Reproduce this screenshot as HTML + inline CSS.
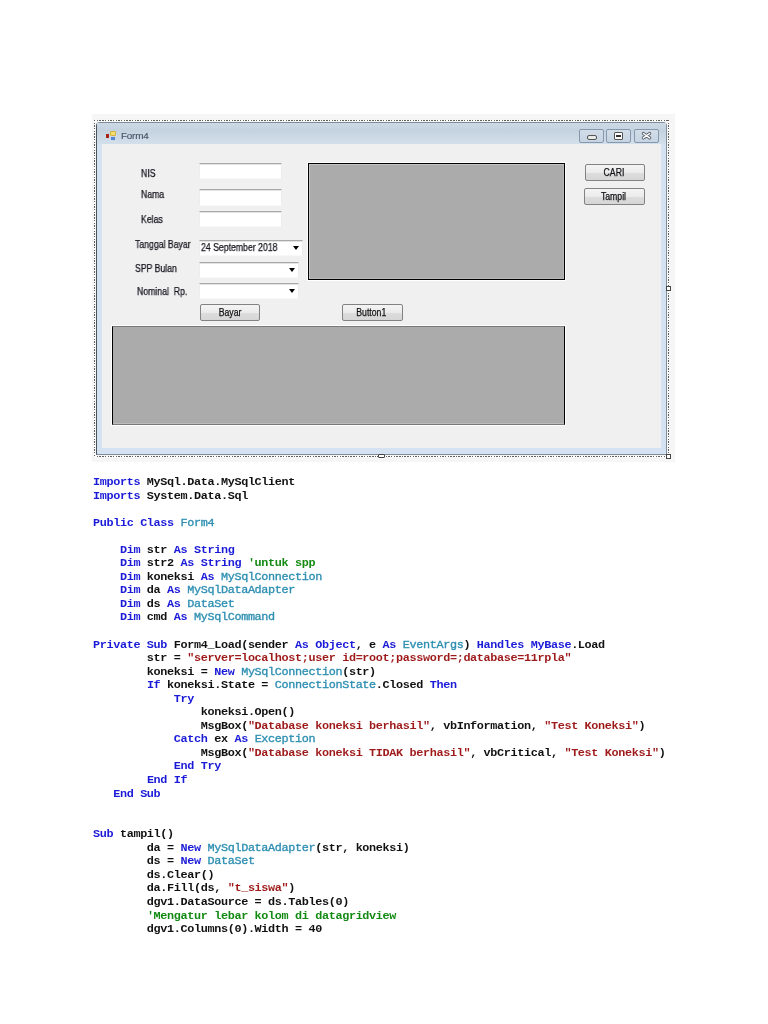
<!DOCTYPE html>
<html><head><meta charset="utf-8">
<style>
html,body{margin:0;padding:0;background:#fff;width:768px;height:1024px;overflow:hidden;position:relative}
.a{position:absolute}
.ui{will-change:transform;font-family:"Liberation Sans",sans-serif;font-size:10px;letter-spacing:0;color:#14141c;-webkit-text-stroke:0.25px #14141c;white-space:nowrap}
.sx{transform:scaleX(0.87);transform-origin:0 0}
.btn span{display:inline-block;transform:scaleX(0.87);transform-origin:50% 50%;position:relative;left:-1.5px}
#bg{left:92px;top:114px;width:583px;height:348px;background:#f6f6f6}
.dh{height:1px;background:repeating-linear-gradient(90deg,#606060 0 1.4px,#fff 1.4px 2.7px)}
.dv{width:1px;background:repeating-linear-gradient(180deg,#606060 0 1.4px,#fff 1.4px 2.7px)}
#frame{left:96px;top:122px;width:569px;height:331px;border:1px solid #7f8c9a;border-left-color:#4a525c;border-radius:4px 4px 0 0;background:#d4e2f1}
#title{left:97px;top:123px;width:569px;height:21px;background:linear-gradient(#cddae6,#c4d2df 35%,#d3e0ec 100%)}
#client{left:102px;top:144px;width:559px;height:304px;background:#f0f0f0}
.cb{top:129px;width:23px;height:12px;border:1px solid #8598ad;border-radius:2px;background:linear-gradient(#d2dde8,#c6d4e2)}
.tb{width:80.6px;border-radius:1px;height:13px;background:#fff;border:1px solid #ececec;border-bottom-color:#f8f8f8;border-top-color:#a9a9a9;box-shadow:inset 0 1px #e2e2e2}
.dd{height:14px;background:#fff;border:1px solid #ececec;border-bottom-color:#f8f8f8;border-top-color:#a9a9a9;box-shadow:inset 0 1px #e2e2e2}
.arr{width:0;height:0;border-left:3px solid transparent;border-right:3px solid transparent;border-top:4px solid #000}
.btn{height:14.8px;border:1px solid #828282;border-radius:2px;background:linear-gradient(#f4f4f4 0%,#ebebeb 50%,#dddddd 51%,#d6d6d6 100%);text-align:center;line-height:15.5px;color:#111;box-sizing:content-box;padding-right:0}
.panel{background:#ababab;border:1px solid #000;border-top-color:#606060;box-shadow:0 0 0 1px #fff}
.h{width:3px;height:3px;border:1px solid #444;background:#fff}
pre{margin:0;will-change:transform;font-family:"Liberation Mono",monospace;font-weight:bold;font-size:11.8px;letter-spacing:-0.345px;line-height:13.54px;color:#111}
.k{color:#1a1ad8}
.t{color:#2e8fb2;font-weight:normal;-webkit-text-stroke:0.35px #2e8fb2}
.s{color:#9e1a1a}
.c{color:#138a13}
</style></head><body>
<div class="a" id="bg"></div>
<div class="a dh" style="left:94px;top:120px;width:575px"></div><div class="a dh" style="left:94px;top:456px;width:575px"></div><div class="a dv" style="left:94px;top:120px;height:337px"></div><div class="a dv" style="left:668px;top:120px;height:337px"></div>
<div class="a" id="frame"></div>
<div class="a" id="title"></div>
<div class="a" id="client"></div>
<!-- title icon -->
<div class="a" style="left:106px;top:134px;width:3px;height:4px;background:#a82416"></div>
<div class="a" style="left:110px;top:130.5px;width:4px;height:3px;background:#f4e070;border:1px solid #d8b03a;border-radius:1px"></div>
<div class="a" style="left:110.5px;top:137px;width:4px;height:3px;background:#5585d5"></div>
<div class="a ui" style="left:120.5px;top:129.9px;font-size:9.9px;color:#465264;-webkit-text-stroke:0.15px #465264;letter-spacing:-0.2px">Form4</div>
<!-- caption buttons -->
<div class="a cb" style="left:579px"></div>
<div class="a cb" style="left:606px"></div>
<div class="a cb" style="left:634px"></div>
<div class="a" style="left:587px;top:135px;width:8px;height:3px;border:1px solid #555;border-radius:2px;background:#e8e8e8"></div>
<div class="a" style="left:614px;top:132px;width:7px;height:6px;border:1px solid #555;border-radius:1px;background:#fff"></div>
<div class="a" style="left:616px;top:135px;width:5px;height:2px;background:#333"></div>
<svg class="a" style="left:638px;top:129px" width="17" height="14"><path d="M5.4 4.5 L11.6 8.9 M11.6 4.5 L5.4 8.9" stroke="#56606c" stroke-width="3.3" stroke-linecap="round"/><path d="M5.4 4.5 L11.6 8.9 M11.6 4.5 L5.4 8.9" stroke="#fff" stroke-width="1.5" stroke-linecap="round"/></svg>

<!-- labels -->
<div class="a ui sx" style="left:141px;top:168px">NIS</div>
<div class="a ui sx" style="left:141px;top:189px">Nama</div>
<div class="a ui sx" style="left:141px;top:214px">Kelas</div>
<div class="a ui sx" style="left:135px;top:239px">Tanggal Bayar</div>
<div class="a ui sx" style="left:135px;top:263px">SPP Bulan</div>
<div class="a ui sx" style="left:137px;top:285.5px">Nominal&nbsp; Rp.</div>
<!-- textboxes -->
<div class="a tb" style="left:199px;top:163px;height:13.5px"></div>
<div class="a tb" style="left:199px;top:189px;height:14.5px"></div>
<div class="a tb" style="left:199px;top:211.3px;height:14px"></div>
<div class="a dd" style="left:199px;top:240px;width:101.7px"></div>
<div class="a ui sx" style="left:201px;top:242px">24 September 2018</div>
<div class="a arr" style="left:293px;top:246px"></div>
<div class="a dd" style="left:199px;top:262px;width:97.8px"></div>
<div class="a arr" style="left:289px;top:268px"></div>
<div class="a dd" style="left:199px;top:283px;width:97.8px"></div>
<div class="a arr" style="left:289px;top:289px"></div>
<!-- panels -->
<div class="a panel" style="left:308px;top:163px;width:255px;height:115px;border-top-color:#000;box-shadow:0 0 0 1px #fff,inset 1px 1px #c4c4c4,inset -1px -1px #b8b8b8"></div>
<div class="a panel" style="left:112px;top:326px;width:451px;height:96.8px;border-top-color:#7a7a7a;border-bottom-color:#7a7a7a;box-shadow:0 0 0 1px #fff,inset 0 -1px #bdbdbd"></div>
<!-- buttons -->
<div class="a btn ui" style="left:585px;top:164px;width:58px"><span>CARI</span></div>
<div class="a btn ui" style="left:584px;top:188px;width:59px;height:14.8px;line-height:16px"><span>Tampil</span></div>
<div class="a btn ui" style="left:200px;top:304px;width:58px"><span style="left:0">Bayar</span></div>
<div class="a btn ui" style="left:342px;top:304px;width:59px"><span>Button1</span></div>
<!-- handles -->
<div class="a h" style="left:666px;top:286px"></div>
<div class="a h" style="left:378px;top:454px;width:4.7px;height:2.4px;border-radius:1px"></div>
<div class="a h" style="left:666px;top:454px"></div>

<pre class="a" style="left:93px;top:475.6px"><span class="k">Imports</span> MySql.Data.MySqlClient
<span class="k">Imports</span> System.Data.Sql

<span class="k">Public Class</span> <span class="t">Form4</span>

    <span class="k">Dim</span> str <span class="k">As String</span>
    <span class="k">Dim</span> str2 <span class="k">As String</span> <span class="c">'untuk spp</span>
    <span class="k">Dim</span> koneksi <span class="k">As</span> <span class="t">MySqlConnection</span>
    <span class="k">Dim</span> da <span class="k">As</span> <span class="t">MySqlDataAdapter</span>
    <span class="k">Dim</span> ds <span class="k">As</span> <span class="t">DataSet</span>
    <span class="k">Dim</span> cmd <span class="k">As</span> <span class="t">MySqlCommand</span>

<span class="k">Private Sub</span> Form4_Load(sender <span class="k">As Object</span>, e <span class="k">As</span> <span class="t">EventArgs</span>) <span class="k">Handles MyBase</span>.Load
        str = <span class="s">"server=localhost;user id=root;password=;database=11rpla"</span>
        koneksi = <span class="k">New</span> <span class="t">MySqlConnection</span>(str)
        <span class="k">If</span> koneksi.State = <span class="t">ConnectionState</span>.Closed <span class="k">Then</span>
            <span class="k">Try</span>
                koneksi.Open()
                MsgBox(<span class="s">"Database koneksi berhasil"</span>, vbInformation, <span class="s">"Test Koneksi"</span>)
            <span class="k">Catch</span> ex <span class="k">As</span> <span class="t">Exception</span>
                MsgBox(<span class="s">"Database koneksi TIDAK berhasil"</span>, vbCritical, <span class="s">"Test Koneksi"</span>)
            <span class="k">End Try</span>
        <span class="k">End If</span>
   <span class="k">End Sub</span>


<span class="k">Sub</span> tampil()
        da = <span class="k">New</span> <span class="t">MySqlDataAdapter</span>(str, koneksi)
        ds = <span class="k">New</span> <span class="t">DataSet</span>
        ds.Clear()
        da.Fill(ds, <span class="s">"t_siswa"</span>)
        dgv1.DataSource = ds.Tables(0)
        <span class="c">'Mengatur lebar kolom di datagridview</span>
        dgv1.Columns(0).Width = 40</pre>
</body></html>
